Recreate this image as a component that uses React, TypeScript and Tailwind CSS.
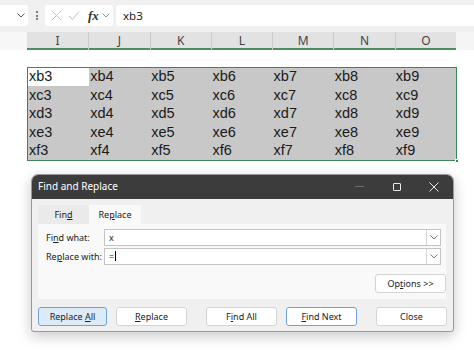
import React from "react";

const cols = ["I", "J", "K", "L", "M", "N", "O"];
const rows = ["b", "c", "d", "e", "f"];
const nums = [3, 4, 5, 6, 7, 8, 9];

function U({ children }: { children: React.ReactNode }) {
  return <span className="underline underline-offset-[1px]">{children}</span>;
}

function Chevron({ className = "" }: { className?: string }) {
  return (
    <svg width="8" height="5" viewBox="0 0 8 5" className={className}>
      <path d="M0.5 0.5 L4 4 L7.5 0.5" fill="none" stroke="currentColor" strokeWidth="1" />
    </svg>
  );
}

function Btn({
  children,
  w,
  variant = "normal",
}: {
  children: React.ReactNode;
  w: string;
  variant?: "normal" | "primary" | "focus";
}) {
  const cls =
    variant === "primary"
      ? "bg-[#dcebf7] border-[#6ea3d6]"
      : variant === "focus"
      ? "bg-white border-[#6ea3d6]"
      : "bg-white border-[#d4d4d4]";
  return (
    <div
      className={`${w} h-[19px] border ${cls} rounded-[3px] flex items-center justify-center text-[9px] text-[#222]`}
    >
      <span className="whitespace-pre">{children}</span>
    </div>
  );
}

function Field({ value, caret }: { value: string; caret?: boolean }) {
  return (
    <div className="w-[337px] h-[17px] bg-white border border-[#c4c4c4] flex items-center">
      <div className="flex-1 pl-[4px] text-[9px] text-[#222] flex items-center">
        {value}
        {caret && <span className="inline-block w-[1px] h-[10px] bg-black ml-[1px]" />}
      </div>
      <div className="w-[14px] h-full border-l border-[#d4d4d4] flex items-center justify-center text-[#777]">
        <Chevron />
      </div>
    </div>
  );
}

export default function App() {
  return (
    <div
      className="w-[474px] h-[351px] bg-white overflow-hidden"
      style={{ fontFamily: '"Noto Sans", "Liberation Sans", sans-serif' }}
    >
      {/* toolbar */}
      <div className="bg-[#f0f0f0] pt-[5px] pb-[6px] flex items-center h-[32px]">
        <div className="w-[28px] h-[21px] bg-white rounded-r-[3px] flex items-center justify-end pr-[3px] text-[#555]">
          <Chevron />
        </div>
        <div className="w-[17px] flex flex-col items-center justify-center gap-[1.5px]">
          <div className="w-[2px] h-[2px] bg-[#555] rounded-full" />
          <div className="w-[2px] h-[2px] bg-[#555] rounded-full" />
          <div className="w-[2px] h-[2px] bg-[#555] rounded-full" />
        </div>
        <div className="w-[68px] h-[21px] bg-white rounded-[3px] flex items-center pl-[6px]">
          <svg width="11" height="11" viewBox="0 0 11 11">
            <path d="M1 1 L10 10 M10 1 L1 10" stroke="#c2c2c2" strokeWidth="1" />
          </svg>
          <svg width="12" height="11" viewBox="0 0 12 11" className="ml-[6px]">
            <path d="M1 6 L4.5 9.5 L11 1.5" fill="none" stroke="#c2c2c2" strokeWidth="1" />
          </svg>
          <span
            className="ml-[8px] text-[13px] italic font-bold text-[#333] leading-none"
            style={{ fontFamily: '"Liberation Serif", serif' }}
          >
            fx
          </span>
          <Chevron className="ml-[3px] text-[#999]" />
        </div>
        <div className="ml-[3px] flex-1 h-[21px] bg-white rounded-l-[3px] flex items-center pl-[7px] text-[11.5px] text-[#222]">
          xb3
        </div>
      </div>
      {/* column headers */}
      <div className="flex h-[18px]">
        <div className="w-[27px] bg-[#f7f7f7]" />
        <div className="w-[429px] grid grid-cols-7 bg-[#e2e2e2] border-b-2 border-[#4b8f61]">
          {cols.map((c, i) => (
            <div
              key={c}
              className={`flex items-center justify-center text-[12px] text-[#444] ${
                i > 0 ? "border-l border-[#cbcbcb]" : ""
              }`}
            >
              {c}
            </div>
          ))}
        </div>
        <div className="flex-1 bg-[#f5f5f5]" />
      </div>
      {/* data */}
      <div className="mt-[17px] ml-[27px] w-[430px] relative">
        <div
          className="border border-[#3f855a] bg-[#c8c8c8] grid grid-cols-7"
          style={{ fontFamily: '"Liberation Sans", Arial, sans-serif' }}
        >
          {rows.map((r, ri) =>
            nums.map((n, ni) => (
              <div
                key={r + n}
                className={`h-[18.4px] flex items-center pl-[1px] text-[14.5px] text-[#1a1a1a] ${
                  ri === 0 && ni === 0 ? "bg-white" : ""
                }`}
              >
                x{r}
                {n}
              </div>
            ))
          )}
        </div>
        <div className="absolute right-[-2px] bottom-[-2px] w-[4px] h-[4px] bg-[#3f855a] border border-white" />
      </div>
      {/* dialog */}
      <div className="mt-[13px] ml-[31px] w-[423px] rounded-t-[7px] rounded-b-[3px] border border-[#9a9a9a] bg-[#f0f0f0] shadow-[0_4px_14px_rgba(0,0,0,0.22)] overflow-hidden">
        <div className="h-[24px] bg-[#3c3c3c] flex items-center pl-[6px] text-white text-[10px]">
          <span className="flex-1">Find and Replace</span>
          <div className="w-[37px] flex justify-center">
            <div className="w-[9px] h-[1px] bg-[#6a6a6a]" />
          </div>
          <div className="w-[37px] flex justify-center">
            <div className="w-[8px] h-[8px] border border-[#e8e8e8] rounded-[1px]" />
          </div>
          <div className="w-[37px] flex justify-center mr-[1px]">
            <svg width="10" height="10" viewBox="0 0 10 10">
              <path d="M0.5 0.5 L9.5 9.5 M9.5 0.5 L0.5 9.5" stroke="#e8e8e8" strokeWidth="1" />
            </svg>
          </div>
        </div>
        <div className="px-[6px] pt-[6px] pb-[5px]">
          <div className="flex h-[19px] text-[9px] text-[#222]">
            <div className="w-[51px] flex items-center justify-center bg-[#eaeaea]">
              <span>
                Fin<U>d</U>
              </span>
            </div>
            <div className="w-[52px] flex items-center justify-center bg-[#f9f9f9]">
              <span>
                Re<U>p</U>lace
              </span>
            </div>
          </div>
          <div className="w-[408px] h-[75px] bg-[#f9f9f9] pt-[5px] pl-[8px] flex flex-col gap-[2px] text-[9px] text-[#222]">
            <div className="flex items-center">
              <span className="w-[58px]">
                Fi<U>n</U>d what:
              </span>
              <Field value="x" />
            </div>
            <div className="flex items-center">
              <span className="w-[58px]">
                Re<U>p</U>lace with:
              </span>
              <Field value="=" caret />
            </div>
            <div className="flex justify-end mt-[7px]">
              <Btn w="w-[71px]">
                Op<U>t</U>ions &gt;&gt;
              </Btn>
            </div>
          </div>
          <div className="flex mt-[8px]">
            <Btn w="w-[71px]" variant="primary">
              {"Replace "}
              <U>A</U>ll
            </Btn>
            <div className="ml-[9px]">
              <Btn w="w-[71px]">
                <U>R</U>eplace
              </Btn>
            </div>
            <div className="ml-[19px]">
              <Btn w="w-[71px]">
                F<U>i</U>nd All
              </Btn>
            </div>
            <div className="ml-[9px]">
              <Btn w="w-[71px]" variant="focus">
                <U>F</U>ind Next
              </Btn>
            </div>
            <div className="ml-[19px]">
              <Btn w="w-[71px]">Close</Btn>
            </div>
          </div>
        </div>
      </div>
    </div>
  );
}
